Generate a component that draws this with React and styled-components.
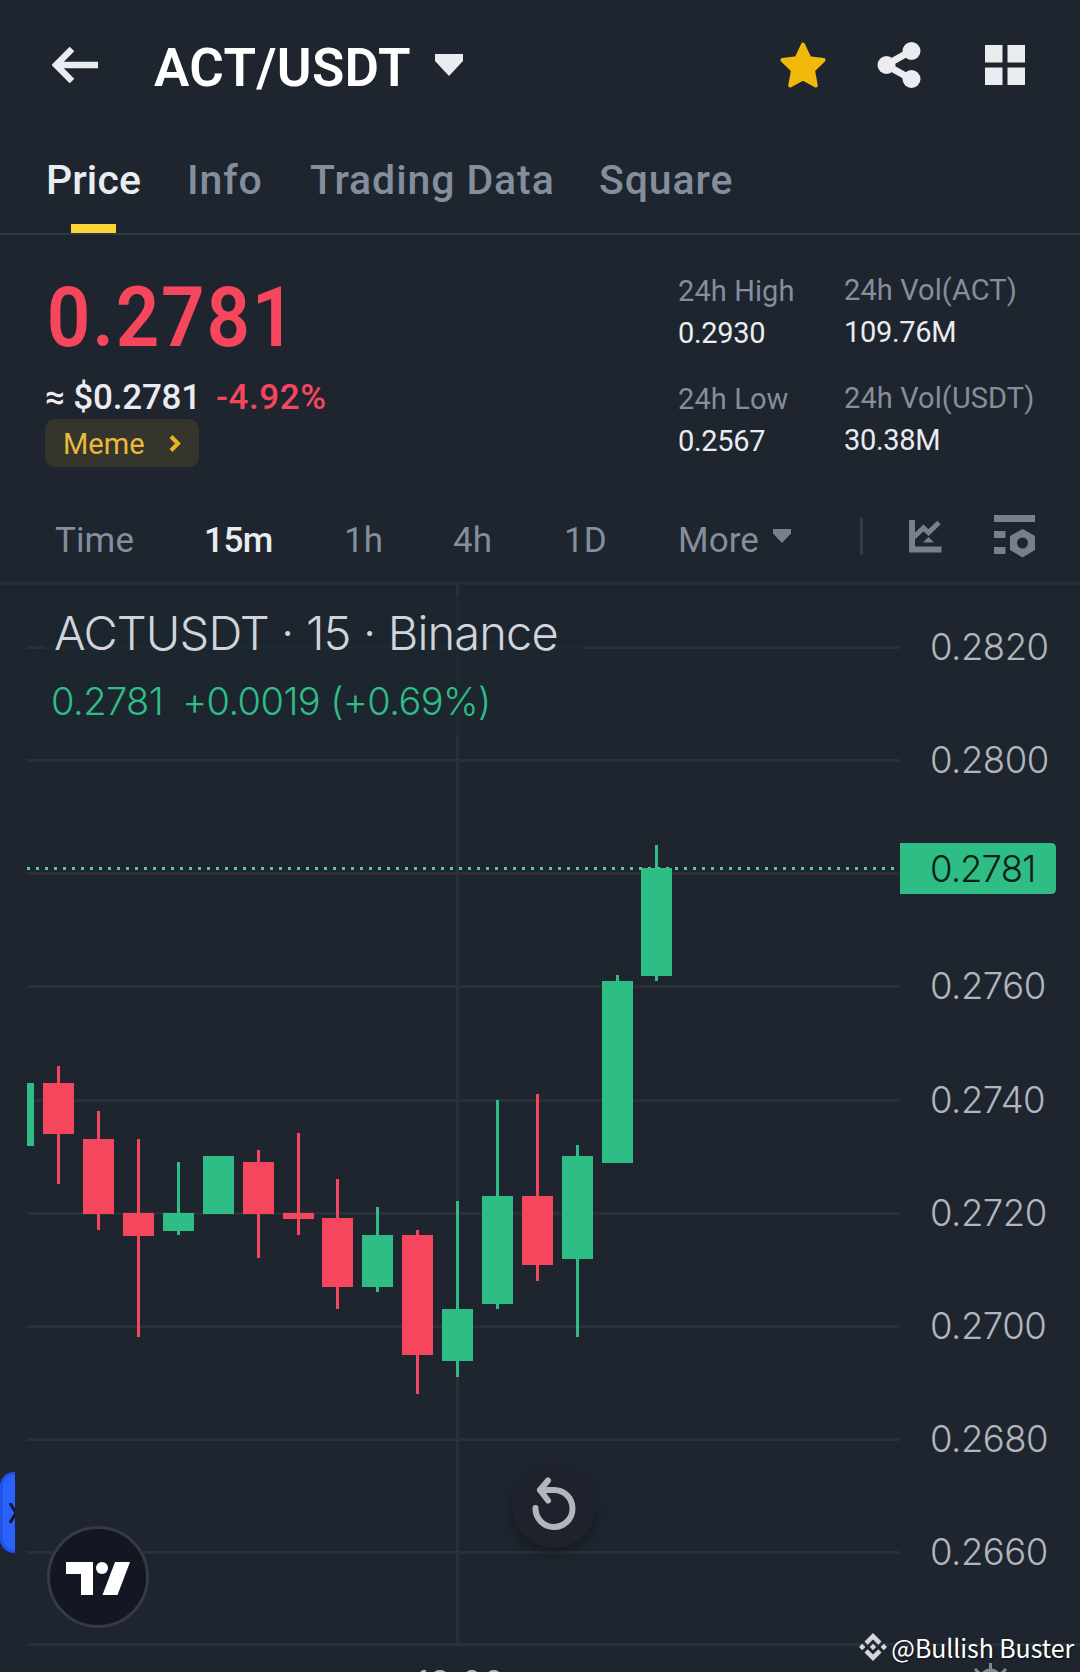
import styled, { createGlobalStyle } from 'styled-components'

const colors = {
  bg: '#1e252f',
  line: '#2f3742',
  grid: '#2a303a',
  text: '#eaecef',
  muted: '#848e9c',
  icon: '#76808f',
  green: '#2ebd85',
  red: '#f6465d',
  yellow: '#f0b90b',
  axis: '#b2b5be'
}

const tabs = ['Price', 'Info', 'Trading Data', 'Square']

const stats = [
  [
    { label: '24h High', value: '0.2930' },
    { label: '24h Low', value: '0.2567' }
  ],
  [
    { label: '24h Vol(ACT)', value: '109.76M' },
    { label: '24h Vol(USDT)', value: '30.38M' }
  ]
]

const intervals = ['Time', '15m', '1h', '4h', '1D']

// y positions are relative to the top of the chart panel
const gridLines = [
  { y: 63, label: '0.2820' },
  { y: 176, label: '0.2800' },
  { y: 289 },
  { y: 402, label: '0.2760' },
  { y: 516, label: '0.2740' },
  { y: 629, label: '0.2720' },
  { y: 742, label: '0.2700' },
  { y: 855, label: '0.2680' },
  { y: 968, label: '0.2660' }
]

const candles = [
  { x: 18.5, up: true, high: 498, top: 498, bottom: 561, low: 561 },
  { x: 58.5, up: false, high: 481, top: 498, bottom: 549, low: 599 },
  { x: 98.5, up: false, high: 526, top: 554, bottom: 629, low: 645 },
  { x: 138.5, up: false, high: 554, top: 628, bottom: 651, low: 752 },
  { x: 178.5, up: true, high: 577, top: 628, bottom: 646, low: 650 },
  { x: 218.5, up: true, high: 571, top: 571, bottom: 629, low: 629 },
  { x: 258.5, up: false, high: 565, top: 577, bottom: 629, low: 673 },
  { x: 298.5, up: false, high: 548, top: 628, bottom: 634, low: 650 },
  { x: 337.5, up: false, high: 594, top: 633, bottom: 702, low: 724 },
  { x: 377.5, up: true, high: 622, top: 650, bottom: 702, low: 707 },
  { x: 417.5, up: false, high: 645, top: 650, bottom: 770, low: 809 },
  { x: 457.5, up: true, high: 616, top: 724, bottom: 776, low: 792 },
  { x: 497.5, up: true, high: 515, top: 611, bottom: 719, low: 724 },
  { x: 537.5, up: false, high: 509, top: 611, bottom: 680, low: 696 },
  { x: 577.5, up: true, high: 560, top: 571, bottom: 674, low: 752 },
  { x: 617.5, up: true, high: 390, top: 396, bottom: 578, low: 578 },
  { x: 656.5, up: true, high: 260, top: 283, bottom: 391, low: 396 }
]

const GlobalStyle = createGlobalStyle`
  * {
    box-sizing: border-box;
  }

  body {
    background-color: ${colors.bg};
    font-family: Roboto, sans-serif;
    margin: 0;
    overflow: hidden;
  }

  svg {
    display: block;
  }
`

const Screen = styled.div`
  background-color: ${colors.bg};
  color: ${colors.text};
  display: flex;
  flex-direction: column;
  height: 1672px;
  overflow: hidden;
  width: 1080px;
`

const Header = styled.header`
  align-items: center;
  display: flex;
  height: 130px;
  padding: 0 55px 0 52px;
`

const Title = styled.h1`
  color: #fff;
  font-size: 53px;
  font-weight: 600;
  letter-spacing: 0.3px;
  line-height: 1;
  margin: 6px 24px 0 55px;
  white-space: nowrap;
`

const HeaderActions = styled.div`
  align-items: center;
  display: flex;
  gap: 51px;
  margin-left: auto;
`

const GridButton = styled.button`
  background: none;
  border: none;
  margin-left: 13px;
  padding: 0;
`

const Tabs = styled.nav`
  border-bottom: 2px solid ${colors.line};
  display: grid;
  grid-template-columns: 141px 123px 289px auto;
  height: 105px;
  padding: 26px 0 0 46px;
`

const Tab = styled.a`
  color: ${({ $active }) => $active ? colors.text : colors.muted};
  display: flex;
  flex-direction: column;
  font-size: 41px;
  font-weight: 500;
  justify-content: space-between;
  letter-spacing: ${({ $active }) => $active ? '0.1px' : '0.9px'};
  line-height: 48px;
  white-space: nowrap;

  &::after {
    background-color: ${({ $active }) => $active ? '#fcd535' : 'transparent'};
    content: '';
    height: 9px;
    margin-left: 25px;
    width: 45px;
  }
`

const Summary = styled.section`
  display: flex;
  height: 265px;
  padding: 37px 0 0 45px;
`

const PriceBlock = styled.div`
  display: flex;
  flex-direction: column;
  width: 633px;
`

const LastPrice = styled.div`
  color: ${colors.red};
  font-size: 83px;
  font-weight: 600;
  letter-spacing: 1.9px;
  line-height: 84px;
  margin-top: 4px;
  padding-left: 2px;
  transform: scaleX(0.92);
  transform-origin: left;
`

const SubPrice = styled.div`
  display: flex;
  font-size: 35px;
  font-weight: 500;
  gap: 15px;
  letter-spacing: -0.2px;
  line-height: 40px;
  margin-top: 18px;
`

const Change = styled.span`
  color: ${colors.red};
  letter-spacing: 0.6px;
`

const Tag = styled.div`
  align-items: center;
  background-color: #35342d;
  border-radius: 10px;
  color: #eab93a;
  display: flex;
  font-size: 29px;
  height: 48px;
  justify-content: space-between;
  margin-top: 1px;
  padding: 1px 18px 0;
  width: 154px;
`

const Stats = styled.div`
  display: flex;
`

const StatColumn = styled.div`
  display: flex;
  flex-direction: column;
  gap: 28px;

  &:first-child {
    padding-top: 1px;
    width: 166px;
  }
`

const Stat = styled.div`
  display: flex;
  flex-direction: column;
  gap: 4px;
  line-height: 38px;
`

const StatLabel = styled.span`
  color: ${colors.muted};
  font-size: 29px;
  letter-spacing: 0.1px;
  margin-top: -1px;
  white-space: nowrap;
`

const StatValue = styled.span`
  color: ${colors.text};
  font-size: 29px;
  letter-spacing: -0.3px;
  margin-bottom: 1px;
`

const Toolbar = styled.div`
  align-items: center;
  border-bottom: 4px solid #262c36;
  display: grid;
  grid-template-columns: 149px 140px 109px 111px 114px 182px 49px 85px auto;
  height: 85px;
  padding: 0 0 9px 55px;
`

const Interval = styled.span`
  align-items: center;
  color: ${({ $active }) => $active ? colors.text : colors.muted};
  display: flex;
  font-size: 35px;
  font-weight: ${({ $active }) => $active ? 500 : 400};
  gap: 14px;
  letter-spacing: ${({ $active }) => $active ? '-0.5px' : '0.1px'};
  line-height: 40px;
  padding-top: 9px;

  svg {
    margin-bottom: 10px;
  }
`

const Divider = styled.span`
  background-color: #333b47;
  height: 37px;
  width: 3px;
`

const ChartPanel = styled.main`
  height: 1087px;
  position: relative;
`

const Legend = styled.div`
  background-color: rgba(30, 37, 47, 0.75);
  display: flex;
  flex-direction: column;
  font-family: Inter, 'Liberation Sans', sans-serif;
  font-weight: 300;
  height: 140px;
  left: 44px;
  padding: 10px 0 0 10px;
  position: absolute;
  top: 10px;
  white-space: nowrap;
  width: 541px;
`

const LegendTitle = styled.div`
  color: #d1d4dc;
  font-size: 47px;
  letter-spacing: -0.85px;
  line-height: 56px;
`

const LegendValues = styled.div`
  color: ${colors.green};
  display: flex;
  font-size: 38px;
  gap: 19px;
  letter-spacing: -0.55px;
  line-height: 46px;
  margin: 17px 0 0 -3px;
`

const SideTab = styled.button`
  background-color: #2962ff;
  border: 3px solid #1e53e5;
  border-right: none;
  border-radius: 14px 0 0 14px;
  height: 81px;
  left: 0;
  padding: 0 0 0 6px;
  position: absolute;
  top: 887px;
  width: 15px;
`

const LogoBadge = styled.div`
  align-items: center;
  background-color: #131722;
  border: 3px solid #363a45;
  border-radius: 50%;
  display: flex;
  height: 102px;
  justify-content: center;
  left: 47px;
  padding-top: 2px;
  position: absolute;
  top: 941px;
  width: 102px;
`

const ResetButton = styled.button`
  align-items: center;
  background-color: #1e222d;
  border: none;
  border-radius: 50%;
  box-shadow: 0 6px 12px rgba(0, 0, 0, 0.3);
  display: flex;
  height: 84px;
  justify-content: center;
  left: 512px;
  padding: 0 0 4px;
  position: absolute;
  top: 879px;
  width: 84px;
`

const Watermark = styled.div`
  align-items: center;
  color: #fff;
  display: flex;
  font-family: 'Noto Sans CJK SC', sans-serif;
  font-size: 25px;
  gap: 4px;
  letter-spacing: -0.1px;
  line-height: 36px;
  position: absolute;
  right: 6px;
  text-shadow: 1px 1px 2px rgba(0, 0, 0, 0.6);
  top: 1044px;
  white-space: nowrap;
`

function BackIcon() {
  return (
    <svg width='47' height='36' viewBox='0 0 47 36' fill='none' stroke={colors.text} strokeWidth='6.5'>
      <path d='M4 18H46' />
      <path d='M20 2L4 18L20 34' />
    </svg>
  )
}

function Caret({ width, height, color }) {
  return (
    <svg width={width} height={height} viewBox='0 0 28 22' preserveAspectRatio='none' fill={color}>
      <path d='M0 0H28V7L14 22L0 7Z' />
    </svg>
  )
}

function StarIcon() {
  return (
    <svg width='46' height='46' viewBox='0 0 46 46' fill={colors.yellow} stroke={colors.yellow} strokeWidth='4' strokeLinejoin='round'>
      <path d='M23 2.5L29.3 16.2L43.5 18L33 28.3L35.8 43.5L23 36.5L10.2 43.5L13 28.3L2.5 18L16.7 16.2Z' />
    </svg>
  )
}

function ShareIcon() {
  return (
    <svg width='44' height='46' viewBox='0 0 44 46' fill={colors.text}>
      <path d='M34 9L9 23L34 37' fill='none' stroke={colors.text} strokeWidth='7' />
      <circle cx='9.5' cy='23' r='9' />
      <circle cx='34.5' cy='9' r='9' />
      <circle cx='34.5' cy='37' r='9' />
    </svg>
  )
}

function GridIcon() {
  return (
    <svg width='40' height='40' viewBox='0 0 40 40' fill={colors.text}>
      <path d='M0 0H17.5V17.5H0ZM22.5 0H40V17.5H22.5ZM0 22.5H17.5V40H0ZM22.5 22.5H40V40H22.5Z' />
    </svg>
  )
}

function ChartIcon() {
  return (
    <svg width='33' height='33' viewBox='0 0 33 33' fill={colors.icon}>
      <path d='M0 0H6V26.5H32.5V32.5H0Z' />
      <path d='M5 17L14.5 8L19.5 12.5L30 2.5' fill='none' stroke={colors.icon} strokeWidth='5' />
      <path d='M19.5 17L25 22.5H14Z' />
    </svg>
  )
}

function SettingsIcon() {
  return (
    <svg width='42' height='43' viewBox='0 0 42 43' fill={colors.icon}>
      <path d='M0 0H41V7H0ZM0 16H11.5V23H0ZM0 32H11.5V39H0Z' />
      <path fillRule='evenodd' d='M28.5 14L41 21V35L28.5 42.5L16 35V21ZM28.5 22.5A5.5 5.5 0 1 0 28.5 33.5A5.5 5.5 0 1 0 28.5 22.5Z' />
    </svg>
  )
}

function ChevronIcon() {
  return (
    <svg width='12' height='17' viewBox='0 0 12 17' fill='none' stroke='#eab422' strokeWidth='4'>
      <path d='M2 1.5L9 8.5L2 15.5' />
    </svg>
  )
}

function TradingViewLogo() {
  return (
    <svg width='64' height='33' viewBox='0 0 64 33' fill='#fff'>
      <path d='M0 0H27V33H15V12H0Z' />
      <circle cx='36' cy='6' r='6' />
      <path d='M49 0H64L51.5 33H36.5Z' />
    </svg>
  )
}

function ResetIcon() {
  return (
    <svg width='44' height='54' viewBox='0 0 44 54' fill='none' stroke={colors.axis} strokeWidth='6' strokeLinecap='round'>
      <path d='M3.5 31A18.5 18.5 0 1 0 22 13H8' />
      <path d='M16 3.5L8 13L16 23.5' strokeLinejoin='round' />
    </svg>
  )
}

function BinanceIcon() {
  return (
    <svg width='28' height='28' viewBox='0 0 28 28' fill='#d6d6d6'>
      <path d='M14 0L22.5 8.5L19.3 11.7L14 6.4L8.7 11.7L5.5 8.5Z' />
      <path d='M14 28L22.5 19.5L19.3 16.3L14 21.6L8.7 16.3L5.5 19.5Z' />
      <path d='M14 10.8L17.2 14L14 17.2L10.8 14ZM3.2 10.8L6.4 14L3.2 17.2L0 14ZM24.8 10.8L28 14L24.8 17.2L21.6 14Z' />
    </svg>
  )
}

function Candle({ x, up, high, top, bottom, low }) {
  return (
    <g fill={up ? colors.green : colors.red}>
      <rect x={x - 1.5} y={high} width='3' height={low - high} />
      <rect x={x - 15.5} y={top} width='31' height={bottom - top} />
    </g>
  )
}

function Chart() {
  return (
    <svg width='1080' height='1087' viewBox='0 0 1080 1087' fontFamily="Inter, 'Liberation Sans', sans-serif" fontWeight='300'>
      <defs>
        <clipPath id='plot'>
          <rect x='27' y='0' width='873' height='1059' />
        </clipPath>
      </defs>
      <g stroke={colors.grid} strokeWidth='3'>
        {gridLines.map(({ y }) => <path key={y} d={`M27 ${y - 0.5}H900`} />)}
        <path d='M457.5 0V1059' />
        <path d='M27 1059.5H1080' />
      </g>
      <path d='M27 283.5H897' stroke='#5cc8a0' strokeWidth='3' strokeDasharray='3 6' />
      <g clipPath='url(#plot)'>
        {candles.map(candle => <Candle key={candle.x} {...candle} />)}
      </g>
      <g fill={colors.axis} fontSize='36.5' letterSpacing='-0.5'>
        {gridLines.filter(({ label }) => label).map(({ y, label }) => (
          <text key={label} x='930' y={y + 11.5}>{label}</text>
        ))}
        <text x='415' y='1112'>18:00</text>
      </g>
      <path d='M900 258H1051Q1056 258 1056 263V304Q1056 309 1051 309H900Z' fill={colors.green} />
      <text x='930' y='296.5' fill='#0d1f18' fontSize='36.5' letterSpacing='-0.9'>0.2781</text>
      <g stroke='#868993' strokeWidth='3' fill='#868993'>
        <circle cx='990.5' cy='1095' r='10' />
        <path d='M990.5 1078V1086M975 1084L980 1089M1006 1084L1001 1089' />
      </g>
    </svg>
  )
}

export default function App() {
  return (
    <Screen>
      <GlobalStyle />
      <Header>
        <BackIcon />
        <Title>ACT/USDT</Title>
        <Caret width={28} height={22} color={colors.text} />
        <HeaderActions>
          <StarIcon />
          <ShareIcon />
          <GridButton><GridIcon /></GridButton>
        </HeaderActions>
      </Header>
      <Tabs>
        {tabs.map((tab, index) => <Tab key={tab} $active={index === 0}>{tab}</Tab>)}
      </Tabs>
      <Summary>
        <PriceBlock>
          <LastPrice>0.2781</LastPrice>
          <SubPrice>
            <span>≈ $0.2781</span>
            <Change>-4.92%</Change>
          </SubPrice>
          <Tag>Meme<ChevronIcon /></Tag>
        </PriceBlock>
        <Stats>
          {stats.map((column, index) => (
            <StatColumn key={index}>
              {column.map(({ label, value }) => (
                <Stat key={label}>
                  <StatLabel>{label}</StatLabel>
                  <StatValue>{value}</StatValue>
                </Stat>
              ))}
            </StatColumn>
          ))}
        </Stats>
      </Summary>
      <Toolbar>
        {intervals.map(interval => (
          <Interval key={interval} $active={interval === '15m'}>{interval}</Interval>
        ))}
        <Interval>More<Caret width={18} height={14} color={colors.icon} /></Interval>
        <Divider />
        <ChartIcon />
        <SettingsIcon />
      </Toolbar>
      <ChartPanel>
        <Chart />
        <Legend>
          <LegendTitle>ACTUSDT · 15 · Binance</LegendTitle>
          <LegendValues>
            <span>0.2781</span>
            <span>+0.0019 (+0.69%)</span>
          </LegendValues>
        </Legend>
        <SideTab>
          <svg width='6' height='20' viewBox='0 0 6 20' fill='none' stroke='#131722' strokeWidth='3'>
            <path d='M1 0L7 10L1 20' />
          </svg>
        </SideTab>
        <LogoBadge><TradingViewLogo /></LogoBadge>
        <ResetButton><ResetIcon /></ResetButton>
        <Watermark><BinanceIcon />@Bullish Buster</Watermark>
      </ChartPanel>
    </Screen>
  )
}
